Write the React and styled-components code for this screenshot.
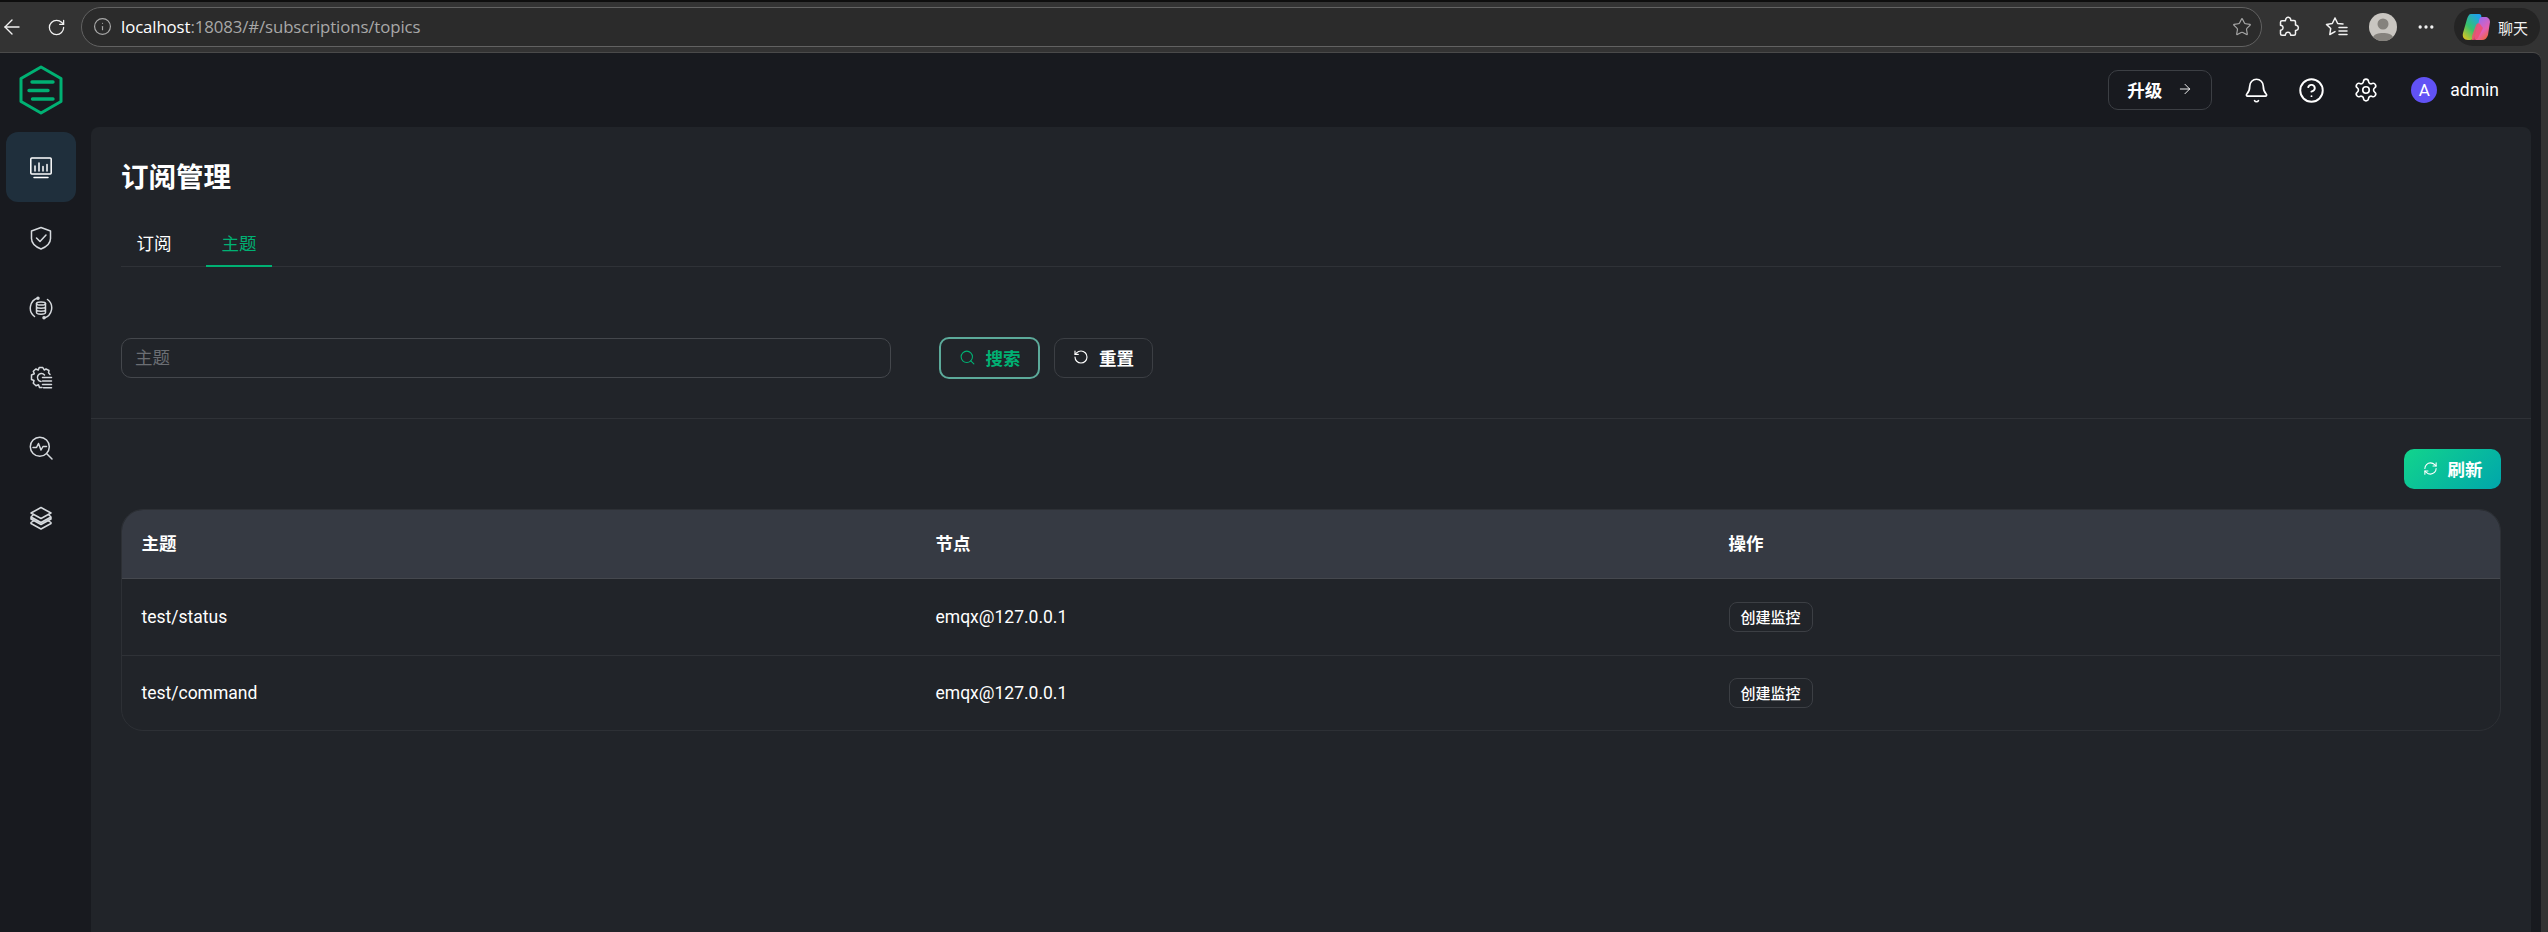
import React from 'react';
import styled, { createGlobalStyle } from 'styled-components';
import {
	ArrowLeft, ArrowRight, Bell, CircleHelp, Info, MoreHorizontal, RefreshCw, RotateCcw, RotateCw, Search, Settings, Star,
} from 'lucide-react';

const GlobalStyle = createGlobalStyle`
	html, body {
		margin: 0;
		height: 100%;
		background: #333333;
		overflow: hidden;
	}

	* {
		box-sizing: border-box;
	}

	#root {
		height: 100%;
	}
`;

const font = `Roboto, 'Noto Sans CJK SC', sans-serif`;

const Window = styled.div`
	height: 932px;
	display: flex;
	flex-direction: column;
	background: #333333;
	font-family: ${font};
	color: #ffffff;
`;

const BrowserBar = styled.div`
	height: 53px;
	flex: none;
	display: flex;
	align-items: center;
	border-top: 2px solid #0e0e0e;
	padding: 0 8px 1px 0;
	color: #f2f2f2;
`;

const BarIcon = styled.span`
	width: ${p => p.$w || 40}px;
	margin-left: ${p => p.$ml || 0}px;
	flex: none;
	display: flex;
	align-items: center;
	justify-content: center;
`;

const UrlBar = styled.div`
	width: 2181px;
	height: 40px;
	margin-left: 13px;
	margin-top: -1px;
	padding: 0 9px 0 11px;
	flex: none;
	display: flex;
	align-items: center;
	background: #2b2b2b;
	border: 1px solid #626262;
	border-radius: 20px;
	color: #a8a8a8;
`;

const UrlText = styled.div`
	flex: 1;
	margin-left: 9px;
	font-family: 'Open Sans', sans-serif;
	font-size: 16.8px;
	letter-spacing: -0.1px;

	b {
		font-weight: 400;
		color: #ffffff;
	}
`;

const Divider = styled.span`
	width: 1px;
	height: 20px;
	margin: 0 13px 0 12px;
	background: #5f5f5f;
`;

const Profile = styled.span`
	width: 28px;
	height: 28px;
	margin-left: 20px;
	flex: none;
`;

const ChatPill = styled.div`
	width: 86px;
	height: 38px;
	margin-left: 16px;
	padding-left: 8px;
	flex: none;
	display: flex;
	align-items: center;
	gap: 8px;
	background: #242424;
	border-radius: 19px;
	font-size: 15px;
`;

const Page = styled.div`
	flex: 1;
	min-height: 0;
	margin-right: 7px;
	display: grid;
	grid-template-columns: 91px 1fr;
	grid-template-rows: 74px 1fr;
	background: #181a1f;
	border-top-right-radius: 8px;
	box-shadow: 0 -1px 0 #4a4a4a;
`;

const LogoCell = styled.div`
	display: flex;
	align-items: center;
	padding-left: 18px;
`;

const TopBar = styled.div`
	display: flex;
	align-items: center;
	justify-content: flex-end;
	padding: 0 42px 0 0;
`;

const UpgradeButton = styled.button`
	width: 104px;
	height: 40px;
	margin-right: 30px;
	padding: 0 0 2px;
	display: flex;
	align-items: center;
	justify-content: center;
	gap: 15px;
	background: transparent;
	border: 1px solid #3c3f44;
	border-radius: 10px;
	color: #ffffff;
	font: 600 17.5px ${font};
`;

const TopIcon = styled.span`
	width: 28px;
	height: 28px;
	margin-right: 27px;
	display: flex;
	align-items: center;
	justify-content: center;
`;

const Avatar = styled.span`
	width: 26px;
	height: 26px;
	margin-left: 4px;
	display: flex;
	align-items: center;
	justify-content: center;
	background: #6152f5;
	border-radius: 50%;
	font-size: 17px;
`;

const UserName = styled.span`
	margin-left: 13px;
	font-size: 17.5px;
`;

const SideNav = styled.nav`
	padding: 5px 0 0 6px;
	display: flex;
	flex-direction: column;
`;

const NavItem = styled.div`
	width: 70px;
	height: 70px;
	padding-top: 2px;
	display: flex;
	align-items: center;
	justify-content: center;
	background: ${p => (p.$active ? '#1f2f3c' : 'transparent')};
	border-radius: 12px;
	color: ${p => (p.$active ? '#ffffff' : '#d6dade')};
`;

const Panel = styled.main`
	margin-right: 10px;
	background: #212429;
	border-radius: 8px 8px 0 0;
`;

const PanelHead = styled.div`
	padding: 34px 30px 0;
`;

const Title = styled.h1`
	margin: 0;
	font-size: 27.5px;
	line-height: 34px;
	font-weight: 700;
`;

const Tabs = styled.div`
	height: 72px;
	padding-top: 23px;
	display: flex;
	gap: 19px;
	border-bottom: 1px solid #2f3237;
`;

const Tab = styled.div`
	width: 66px;
	height: 49px;
	display: flex;
	justify-content: center;
	padding-top: 13px;
	font-size: 17.5px;
	line-height: 26px;
	color: ${p => (p.$active ? '#00b173' : '#ffffff')};
	border-bottom: 2px solid ${p => (p.$active ? '#00b173' : 'transparent')};
`;

const FilterBar = styled.form`
	height: 152px;
	padding: 0 30px 40px;
	display: flex;
	align-items: flex-end;
	border-bottom: 1px solid #2f3237;
`;

const TextInput = styled.input`
	width: 770px;
	height: 40px;
	padding: 0 13px;
	margin-right: 48px;
	background: transparent;
	border: 1px solid #44474c;
	border-radius: 10px;
	color: #ffffff;
	font: 400 17.5px ${font};

	&::placeholder {
		color: #6b6e73;
	}
`;

const Button = styled.button`
	height: ${p => (p.$primary ? 42 : 40)}px;
	width: ${p => (p.$primary ? 101 : 99)}px;
	margin: ${p => (p.$primary ? '0 14px -1px 0' : 0)};
	padding: 0 0 2px;
	display: flex;
	align-items: center;
	justify-content: center;
	gap: 10px;
	background: transparent;
	border: ${p => (p.$primary ? '2px solid #5caa9a' : '1px solid #3c3f44')};
	border-radius: 10px;
	color: ${p => (p.$primary ? '#00b173' : '#ffffff')};
	font: 600 17.5px ${font};
`;

const Content = styled.section`
	padding: 30px 30px 0;
`;

const ActionRow = styled.div`
	display: flex;
	justify-content: flex-end;
	margin-bottom: 20px;
`;

const RefreshButton = styled.button`
	width: 97px;
	height: 40px;
	padding: 0 0 2px;
	display: flex;
	align-items: center;
	justify-content: center;
	gap: 10px;
	background: linear-gradient(135deg, #12d48c, #00a6ab);
	border: none;
	border-radius: 10px;
	color: #ffffff;
	font: 600 17.5px ${font};
`;

const Table = styled.div`
	border: 1px solid #2d3035;
	border-radius: 22px;
	overflow: hidden;
`;

const Row = styled.div`
	height: ${p => (p.$head ? 69 : 76)}px;
	padding-bottom: ${p => (p.$head ? 3 : 0)}px;
	display: grid;
	grid-template-columns: 794px 793px 1fr;
	align-items: center;
	background: ${p => (p.$head ? '#363a43' : 'transparent')};
	border-top: ${p => (p.$first ? 'none' : '1px solid #2f3237')};
	border-bottom: ${p => (p.$head ? '1px solid #45484e' : 'none')};
	font-size: 17.5px;
	font-weight: ${p => (p.$head ? 700 : 400)};

	&:last-child {
		height: 75px;
	}
`;

const Cell = styled.div`
	padding-left: 19.500px;
`;

const SmallButton = styled.button`
	width: 84px;
	height: 30px;
	padding: 0 0 2px;
	background: transparent;
	border: 1px solid #3c3f44;
	border-radius: 8px;
	color: #ffffff;
	font: 500 15px ${font};
`;

const Logo = () => (
	<svg width="46" height="50" viewBox="0 0 46 50" fill="none" stroke="#00b173" strokeLinecap="round">
		<path d="M23 2 L43 13.5 V36.5 L23 48 L3 36.5 V13.5 Z" strokeWidth="3" strokeLinejoin="round" />
		<path d="M14 17 H35 M11 25.5 H30 M14.5 34 H35" strokeWidth="3.4" />
	</svg>
);

const PuzzleIcon = () => (
	<svg width="24" height="24" viewBox="0 0 24 24" fill="none" stroke="currentColor" strokeWidth="1.5" strokeLinejoin="round">
		<path d="M10 3.5a2.5 2.5 0 0 1 4.6 0.5l.2 1.5h3.2a1.5 1.5 0 0 1 1.5 1.5v3l1 .3a2.6 2.6 0 0 1 0 5l-1 .2v3.2a1.5 1.5 0 0 1-1.5 1.5h-3.2l-.3-1a2.6 2.6 0 0 0-5 0l-.2 1h-3.3a1.5 1.5 0 0 1-1.5-1.5v-3.400l1-.3a2.4 2.4 0 0 0 0-4.500l-1-.3v-3a1.500 1.500 0 0 1 1.500-1.500h3.300z" />
	</svg>
);

const FavoritesIcon = () => (
	<svg width="24" height="24" viewBox="0 0 24 24" fill="none" stroke="currentColor" strokeWidth="1.5" strokeLinejoin="round" strokeLinecap="round">
		<path d="M10 3 L12.700 8.500 L18 9 M10 3 L7.300 8.500 L1.500 9.400 L5.700 13.500 L4.800 19.500 L10 16.600" />
		<path d="M14 12.500 H22 M14 16 H22 M14 19.500 H22" />
	</svg>
);

const ProfileIcon = () => (
	<Profile>
		<svg width="28" height="28" viewBox="0 0 28 28">
			<circle cx="14" cy="14" r="14" fill="#c9c6c1" />
			<circle cx="14" cy="11" r="5.500" fill="#85827d" />
			<path d="M4 24 C6 18.500 22 18.500 24 24 A14 14 0 0 1 4 24 Z" fill="#85827d" />
		</svg>
	</Profile>
);

const CopilotIcon = () => (
	<svg width="28" height="28" viewBox="0 0 28 28">
		<defs>
			<linearGradient id="cpA" x1="0" y1="1" x2="0.7" y2="0">
				<stop offset="0" stopColor="#f5c518" />
				<stop offset="0.5" stopColor="#37c26b" />
				<stop offset="1" stopColor="#1fa2e8" />
			</linearGradient>
			<linearGradient id="cpB" x1="0.2" y1="0" x2="0.8" y2="1">
				<stop offset="0" stopColor="#8f6cf5" />
				<stop offset="0.6" stopColor="#e45fb5" />
				<stop offset="1" stopColor="#f0662e" />
			</linearGradient>
		</defs>
		<path d="M9 1 H17 C19 1 20 3 19 5 L13 23 C12 26 10 27 8 27 H6 C2 27 0 24 1 20 L5 6 C6 3 7 1 9 1 Z" fill="url(#cpA)" />
		<path d="M15 27 H20 C23 27 25 25 26 22 L28 9 C28 6 26 4 23 4 H20 C18 4 17 6 17 8 L13 22 C12 25 13 27 15 27 Z" fill="url(#cpB)" />
		<path d="M10 23 L14 12 C15 10 17 10 18 11 L21 15 L16 25 C15 27 12 27 10 27 Z" fill="#ee4f6f" opacity="0.85" />
	</svg>
);

const navStroke = { fill: 'none', stroke: 'currentColor', strokeWidth: 1.5, strokeLinecap: 'round', strokeLinejoin: 'round' };

const MonitorIcon = () => (
	<svg width="24" height="24" viewBox="0 0 24 24" {...navStroke}>
		<rect x="1.800" y="2" width="20.400" height="16" rx="1" />
		<path d="M6 15 V10 M10 15 V7 M14 15 V10.500 M18 15 V8.500 M5 21.500 H19" />
	</svg>
);

const ShieldIcon = () => (
	<svg width="24" height="24" viewBox="0 0 24 24" {...navStroke}>
		<path d="M12 1.500 L21.500 5 V12.500 C21.500 17.500 17 21 12 23 C7 21 2.500 17.500 2.500 12.500 V5 Z" />
		<path d="M7.500 12 L11 15.500 L17 9" />
	</svg>
);

const DataSyncIcon = () => (
	<svg width="24" height="24" viewBox="0 0 24 24" {...navStroke}>
		<path d="M9 2 A10.500 10.500 0 0 0 5.500 20.500 M15 22 A10.500 10.500 0 0 0 18.500 3.500" />
		<circle cx="9" cy="2.300" r="1" />
		<circle cx="15" cy="21.700" r="1" />
		<ellipse cx="12" cy="7.500" rx="4.500" ry="1.600" />
		<path d="M7.500 7.500 V16.500 C7.500 18.700 16.500 18.700 16.500 16.500 V7.500 M7.500 10.500 C7.500 12.700 16.500 12.700 16.500 10.500 M7.500 13.500 C7.500 15.700 16.500 15.700 16.500 13.500" />
	</svg>
);

const GearListIcon = () => (
	<svg width="24" height="24" viewBox="0 0 24 24" {...navStroke}>
		<path d="M21 8.500 L19.500 6.800 L20 4.500 L17 3 L15.200 4 L13.800 1.500 H10.200 L9.300 4 L6.800 3 L4.300 5.300 L5.300 7.800 L2.500 9 V13.500 L5 14.500 L4.300 17.300 L7 19.700 L9.500 18.700 L10.500 21.500 L13 21.500" />
		<path d="M12 15.500 A4 4 0 1 1 15.500 9" />
		<path d="M13.500 11.500 H22.500 M13.500 15 H22.500 M13.500 18.500 H22.500 M14.500 21.800 H22.500" />
	</svg>
);

const MonitorSearchIcon = () => (
	<svg width="24" height="24" viewBox="0 0 24 24" {...navStroke}>
		<circle cx="10.800" cy="10.800" r="9.500" />
		<path d="M17.800 17.800 L23 23" />
		<path d="M4 11.500 H7.500 L9.500 7.500 L12 14 L14 10.500 H17.500" />
	</svg>
);

const LayersIcon = () => (
	<svg width="24" height="24" viewBox="0 0 24 24" {...navStroke}>
		<path d="M12 1.500 L22 7 L12 12.500 L2 7 Z" />
		<path d="M4.500 8.500 L2 11 V13 L12 18.500 L22 13 V11 L19.500 8.500 M2 11 L12 16.500 L22 11" />
		<path d="M4.500 14.800 L2 16.500 V17.500 L12 23 L22 17.500 V16.500 L19.500 14.800" />
	</svg>
);

const navIcons = [MonitorIcon, ShieldIcon, DataSyncIcon, GearListIcon, MonitorSearchIcon, LayersIcon];

const topics = [
	{ topic: 'test/status', node: 'emqx@127.0.0.1' },
	{ topic: 'test/command', node: 'emqx@127.0.0.1' },
];

const App = () => {
	return (
		<Window>
			<GlobalStyle />
			<BrowserBar>
				<BarIcon $w={24}><ArrowLeft size={24} strokeWidth={1.4} /></BarIcon>
				<BarIcon $w={24} $ml={20}><RotateCw size={19} strokeWidth={1.6} /></BarIcon>
				<UrlBar>
					<Info size={19} strokeWidth={1.5} />
					<UrlText><b>localhost</b>:18083/#/subscriptions/topics</UrlText>
					<Star size={20} strokeWidth={1.4} />
				</UrlBar>
				<BarIcon $w={24} $ml={14}><PuzzleIcon /></BarIcon>
				<Divider />
				<BarIcon $w={24}><FavoritesIcon /></BarIcon>
				<ProfileIcon />
				<BarIcon $w={24} $ml={17}><MoreHorizontal size={20} strokeWidth={2} /></BarIcon>
				<ChatPill>
					<CopilotIcon />
					<span>聊天</span>
				</ChatPill>
			</BrowserBar>

			<Page>
				<LogoCell><Logo /></LogoCell>
				<TopBar>
					<UpgradeButton>升级 <ArrowRight size={16} strokeWidth={1.4} /></UpgradeButton>
					<TopIcon><Bell size={27} strokeWidth={1.5} /></TopIcon>
					<TopIcon><CircleHelp size={27} strokeWidth={1.7} /></TopIcon>
					<TopIcon><Settings size={26} strokeWidth={1.5} /></TopIcon>
					<Avatar>A</Avatar>
					<UserName>admin</UserName>
				</TopBar>

				<SideNav>
					{navIcons.map((Icon, index) => (
						<NavItem key={index} $active={index === 0}><Icon /></NavItem>
					))}
				</SideNav>

				<Panel>
					<PanelHead>
						<Title>订阅管理</Title>
						<Tabs>
							<Tab>订阅</Tab>
							<Tab $active>主题</Tab>
						</Tabs>
					</PanelHead>

					<FilterBar>
						<TextInput placeholder="主题" />
						<Button $primary type="button"><Search size={17} strokeWidth={1.5} />搜索</Button>
						<Button type="button"><RotateCcw size={16} strokeWidth={1.7} />重置</Button>
					</FilterBar>

					<Content>
						<ActionRow>
							<RefreshButton><RefreshCw size={15} strokeWidth={1.7} />刷新</RefreshButton>
						</ActionRow>
						<Table>
							<Row $head $first>
								<Cell>主题</Cell>
								<Cell>节点</Cell>
								<Cell>操作</Cell>
							</Row>
							{topics.map((item, index) => (
								<Row key={item.topic} $first={index === 0}>
									<Cell>{item.topic}</Cell>
									<Cell>{item.node}</Cell>
									<Cell><SmallButton>创建监控</SmallButton></Cell>
								</Row>
							))}
						</Table>
					</Content>
				</Panel>
			</Page>
		</Window>
	);
};

export default App;
